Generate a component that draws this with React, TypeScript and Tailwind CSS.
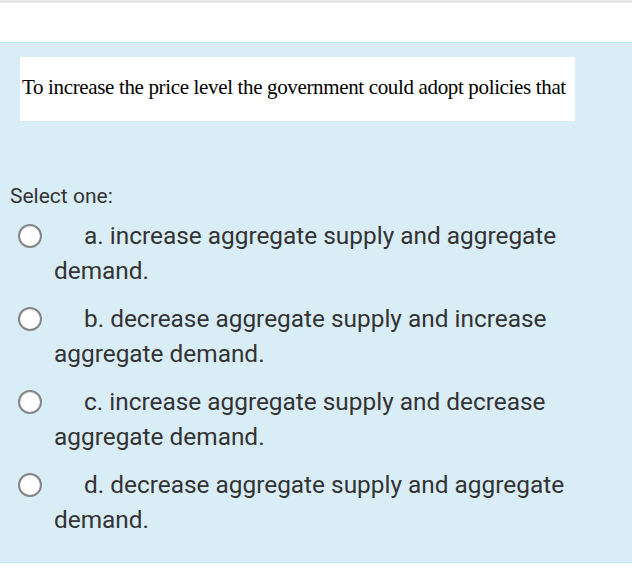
import React from "react";

const options = [
  "a. increase aggregate supply and aggregate demand.",
  "b. decrease aggregate supply and increase aggregate demand.",
  "c. increase aggregate supply and decrease aggregate demand.",
  "d. decrease aggregate supply and aggregate demand.",
];

function Radio() {
  return (
    <span className="inline-block align-[-4px] w-[24px] h-[24px] rounded-full border-2 border-[#858585] bg-white mr-[42px] shadow-[inset_0_1px_1px_rgba(0,0,0,0.08)]" />
  );
}

export default function App() {
  return (
    <div className="w-[632px] h-[581px] bg-white overflow-hidden" style={{ fontFamily: "Roboto, 'Liberation Sans', sans-serif" }}>
      <div className="h-[3px] bg-[#e8e8e8]" />
      <div className="h-[39px] bg-white" />
      <div className="border-y border-[#bce8f1] bg-[#d9edf7] h-[521px] pt-[14px]">
        <div className="ml-[20px] w-[555px] h-[64px] bg-white pl-[2px] pt-[18px]">
          <p className="text-[21px] leading-[24px] text-black tracking-[-0.35px] whitespace-nowrap" style={{ fontFamily: "'Liberation Serif', serif" }}>
            To increase the price level the government could adopt policies that
          </p>
        </div>
        <div className="mt-[63px] pl-[10px] text-[21px] leading-[24px] text-[#333]">Select one:</div>
        <div className="mt-[10px] flex flex-col gap-[13px]">
          {options.map((o) => (
            <div key={o} className="pl-[54px] pr-[40px] -indent-[36px] text-[24.4px] leading-[35px] text-[#333]">
              <Radio />
              {o}
            </div>
          ))}
        </div>
      </div>
    </div>
  );
}
